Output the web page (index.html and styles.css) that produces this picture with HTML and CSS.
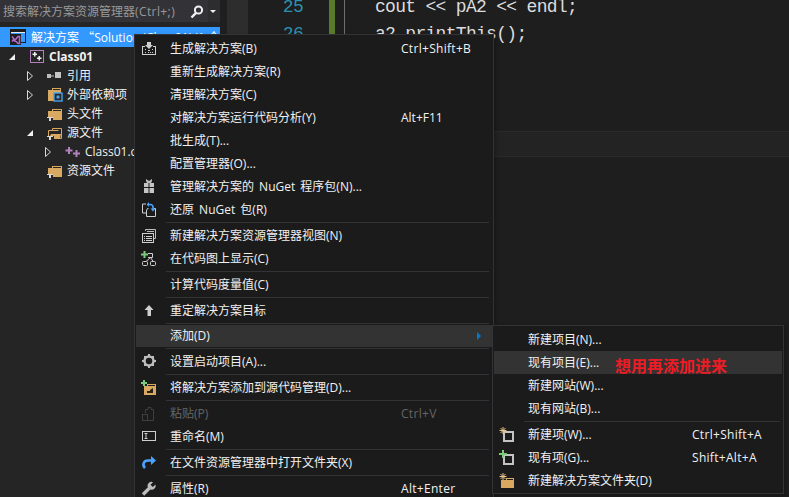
FILE: index.html
```html
<!DOCTYPE html>
<html lang="zh-CN">
<head>
<meta charset="utf-8">
<title>解决方案资源管理器</title>
<link rel="stylesheet" href="styles.css">
</head>
<body>
<div class="app">
  <aside class="explorer">
    <div class="search">
      <div class="search-box">
        <span class="search-text">搜索解决方案资源管理器<span class="lat">(Ctrl+;)</span></span>
        <svg class="search-glass" viewBox="0 0 14 14"><circle cx="8.5" cy="5" r="3.6" fill="none" stroke="#f0f0f0" stroke-width="2"/><path d="M6 7.800 1.500 12.500" stroke="#f0f0f0" stroke-width="2.400" fill="none"/></svg>
      </div>
      <div class="search-drop"><span class="tri-down"></span></div>
    </div>
    <div class="tree">
      <div class="row row-sel">
        <svg class="ic" viewBox="0 0 16 16"><rect x="0.500" y="0.500" width="15" height="13" fill="none" stroke="#1e1e1e"/><rect x="1" y="1" width="14" height="2" fill="#1e1e1e"/><rect x="1" y="3" width="14" height="1" fill="#e8e8e8"/><rect x="0" y="5" width="11" height="11" fill="#1e1e1e"/><path d="M2 7.500 4 10 2 12.500M4 12.500 8 7.500h1.500v7H8l-4-4.500" fill="none" stroke="#b06ac8" stroke-width="1.500"/></svg>
        <span class="lbl">解决方案 <span class="cjk">“</span>Solution 'Class01' (1 个项目)</span>
      </div>
      <div class="row lv1">
        <span class="tw"><span class="tri-open"></span></span>
        <svg class="ic" viewBox="0 0 16 16"><rect x="1.500" y="1.500" width="13" height="12" fill="none" stroke="#b180bd"/><path d="M5 3h1.500v1.500H8V6H6.500v1.500H5V6H3.500V4.500H5zM9.500 7H11v1.500h1.500V10H11v1.500H9.500V10H8V8.500h1.500z" fill="#f0f0f0"/></svg>
        <span class="lbl lbl-b">Class01</span>
      </div>
      <div class="row lv2">
        <span class="tw"><svg class="tri-closed" viewBox="0 0 6 10"><path d="M.5.500v9L5.500 5z" fill="none" stroke="#d8d8d8"/></svg></span>
        <svg class="ic" viewBox="0 0 16 16"><rect x="0" y="6" width="4" height="4" fill="#bdbdbd"/><rect x="4" y="7.500" width="3" height="1" fill="#bdbdbd"/><rect x="8" y="4" width="6" height="6" fill="#c4c4c4"/></svg>
        <span class="lbl">引用</span>
      </div>
      <div class="row lv2">
        <span class="tw"><svg class="tri-closed" viewBox="0 0 6 10"><path d="M.5.500v9L5.500 5z" fill="none" stroke="#d8d8d8"/></svg></span>
        <svg class="ic" viewBox="0 0 16 16"><path d="M1 3h4V1h9v5H9v8H1z" fill="#d9a861"/><path d="M6 2h7v1H6z" fill="#252526"/><rect x="7" y="6" width="8" height="8" fill="#252526" stroke="#4aa3e8" stroke-width="1.400"/><rect x="9.500" y="8.500" width="3" height="3" fill="#4aa3e8"/></svg>
        <span class="lbl">外部依赖项</span>
      </div>
      <div class="row lv2">
        <span class="tw"></span>
        <svg class="ic" viewBox="0 0 16 16"><path d="M1 5h4V3h10v11H6v-3H1z" fill="#d9a861"/><path d="M6 4h8v1H6z" fill="#252526"/><path d="M0 11h6v1H4v3H2v-3H0z" fill="#d8d8d8"/></svg>
        <span class="lbl">头文件</span>
      </div>
      <div class="row lv2">
        <span class="tw"><span class="tri-open"></span></span>
        <svg class="ic" viewBox="0 0 16 16"><path d="M1.500 11V5.500h4v-2h9v10h-2M5 5.500h6.500" fill="none" stroke="#d9a861"/><path d="M4 9h10l-1 5H7v-3H3z" fill="#d9a861"/><path d="M0 11h6v1H4v3H2v-3H0z" fill="#d8d8d8"/></svg>
        <span class="lbl">源文件</span>
      </div>
      <div class="row lv3">
        <span class="tw"><svg class="tri-closed" viewBox="0 0 6 10"><path d="M.5.500v9L5.500 5z" fill="none" stroke="#d8d8d8"/></svg></span>
        <svg class="ic" viewBox="0 0 16 16"><path d="M3 3h2v2.500h2.500v2H5V10H3V7.500H.5v-2H3zM10.500 6h2v2.500H15v2h-2.500V13h-2v-2.500H8v-2h2.500z" fill="#b180bd"/></svg>
        <span class="lbl">Class01.cpp</span>
      </div>
      <div class="row lv2">
        <span class="tw"></span>
        <svg class="ic" viewBox="0 0 16 16"><path d="M1 5h4V3h10v11H6v-3H1z" fill="#d9a861"/><path d="M6 4h8v1H6z" fill="#252526"/><path d="M0 11h6v1H4v3H2v-3H0z" fill="#d8d8d8"/></svg>
        <span class="lbl">资源文件</span>
      </div>
    </div>
  </aside>
  <div class="split"></div>
  <main class="editor">
    <div class="margin-grip"></div>
    <div class="numbers"><div class="ln">25</div><div class="ln">26</div></div>
    <div class="changes"><div class="change-bar"></div></div>
    <div class="outline"></div>
    <div class="code">
      <div class="line">cout &lt;&lt; pA2 &lt;&lt; endl;</div>
      <div class="line">a2.printThis();</div>
      <div class="current"></div>
    </div>
  </main>
</div>

<div class="menu menu-main">
  <div class="mi"><span class="mi-i"><svg class="ic" viewBox="0 0 16 16"><path d="M6 1h4v3h2L8 8 4 4h2z" fill="#cfcfcf"/><path d="M1 5h3v1H2v7h12V6h-2V5h3v9H1z" fill="#cfcfcf"/><path d="M4 8h1v1H4zM7 9h2v1H7zM11 8h1v1h-1zM4 11h1v1H4zM7 11h1v1H7zM9 11h1v1H9zM11 11h1v1h-1z" fill="#cfcfcf"/></svg></span><span class="mi-l">生成解决方案(B)</span><span class="mi-k">Ctrl+Shift+B</span></div>
  <div class="mi"><span class="mi-i"></span><span class="mi-l">重新生成解决方案(R)</span></div>
  <div class="mi"><span class="mi-i"></span><span class="mi-l">清理解决方案(C)</span></div>
  <div class="mi"><span class="mi-i"></span><span class="mi-l">对解决方案运行代码分析(Y)</span><span class="mi-k mi-k-tight">Alt+F11</span></div>
  <div class="mi"><span class="mi-i"></span><span class="mi-l">批生成(T)...</span></div>
  <div class="mi"><span class="mi-i"></span><span class="mi-l">配置管理器(O)...</span></div>
  <div class="mi"><span class="mi-i"><svg class="ic" viewBox="0 0 16 16"><path d="M5 0l3 2 3-2v2l-1 2H6L5 2z" fill="#bdbdbd"/><path d="M3 4h4.500v4H3zM8.500 4H13v4H8.500zM3 9h4.500v5H3zM8.500 9H13v5H8.500z" fill="#c4c4c4"/></svg></span><span class="mi-l">管理解决方案的 NuGet 程序包(N)...</span></div>
  <div class="mi"><span class="mi-i"><svg class="ic" viewBox="0 0 16 16"><path d="M5 2H1.500v9H5" fill="none" stroke="#cfcfcf"/><path d="M6.500 7.500v-1h1M13 6.500h1.500v8h-9v-7" fill="none" stroke="#cfcfcf"/><path d="M6 2.500h3.500a2.500 2.500 0 0 1 2.500 2.500v2" fill="none" stroke="#4aa3ff" stroke-width="1.600"/><path d="M9.500 6.500h5L12 9.500z" fill="#4aa3ff"/><path d="M8 0v5L6 2.500z" fill="#4aa3ff"/></svg></span><span class="mi-l">还原 NuGet 包(R)</span></div>
  <div class="sep"></div>
  <div class="mi"><span class="mi-i"><svg class="ic" viewBox="0 0 16 16"><path d="M4.500 3V1.500h10v9H13" fill="none" stroke="#bdbdbd"/><rect x="6" y="3" width="7" height="1" fill="#bdbdbd"/><rect x="1.500" y="5.500" width="11" height="9" fill="#1b1b1c" stroke="#cfcfcf"/><path d="M3 8h1v1H3zM5 8h6v1H5zM3 10h1v1H3zM5 10h6v1H5zM3 12h1v1H3zM5 12h6v1H5z" fill="#cfcfcf"/></svg></span><span class="mi-l">新建解决方案资源管理器视图(N)</span></div>
  <div class="mi"><span class="mi-i"><svg class="ic" viewBox="0 0 16 16"><path d="M7 2.500h4.500v4H7M9.500 6.500l-5 4.500M9.500 6.500l3 4.500" fill="none" stroke="#cfcfcf"/><rect x="1.500" y="10.500" width="5" height="4" rx="1" fill="#1b1b1c" stroke="#cfcfcf"/><rect x="9.500" y="10.500" width="5" height="4" rx="1" fill="#1b1b1c" stroke="#cfcfcf"/><path d="M2.500 0h2v2.500H7v2H4.500V7h-2V4.500H0v-2h2.500z" fill="#7ccb7c"/></svg></span><span class="mi-l">在代码图上显示(C)</span></div>
  <div class="sep"></div>
  <div class="mi"><span class="mi-i"></span><span class="mi-l">计算代码度量值(C)</span></div>
  <div class="sep"></div>
  <div class="mi"><span class="mi-i"><svg class="ic" viewBox="0 0 16 16"><path d="M8 2l4.500 5H10v6H6.500V7H3.500z" fill="#cfcfcf"/></svg></span><span class="mi-l">重定解决方案目标</span></div>
  <div class="sep"></div>
  <div class="mi mi-hot mi-short"><span class="mi-i"></span><span class="mi-l">添加(D)</span><span class="mi-arrow"></span></div>
  <div class="sep"></div>
  <div class="mi"><span class="mi-i"><svg class="ic" viewBox="0 0 16 16"><circle cx="8" cy="7" r="4.500" fill="none" stroke="#bdbdbd" stroke-width="2.500"/><path d="M7 0h2v2H7zM7 12h2v2H7zM1 6h2v2H1zM13 6h2v2h-2zM3 2h2v2H3zM11 2h2v2h-2zM3 10h2v2H3zM11 10h2v2h-2z" fill="#bdbdbd"/></svg></span><span class="mi-l">设置启动项目(A)...</span></div>
  <div class="sep"></div>
  <div class="mi"><span class="mi-i"><svg class="ic" viewBox="0 0 16 16"><path d="M3 6h3V4h9v11H3z" fill="#d9a861"/><path d="M7 5h7v1H7z" fill="#1b1b1c"/><path d="M6 11h3v-1l3-2v5H6z" fill="#2a2015"/><path d="M2 0h2v2h2v2H4v2H2V4H0V2h2z" fill="#7ccb7c"/></svg></span><span class="mi-l">将解决方案添加到源代码管理(D)...</span></div>
  <div class="sep"></div>
  <div class="mi mi-off"><span class="mi-i"><svg class="ic" viewBox="0 0 16 16"><path d="M4.500 7V3.500H7V1.500h3v2h2.500v11H7" fill="none" stroke="#3f3f40"/><rect x="1.500" y="8.500" width="5" height="6" fill="none" stroke="#3f3f40"/></svg></span><span class="mi-l">粘贴(P)</span><span class="mi-k">Ctrl+V</span></div>
  <div class="mi"><span class="mi-i"><svg class="ic" viewBox="0 0 16 16"><rect x="1.500" y="2.500" width="13" height="9" fill="none" stroke="#cfcfcf"/><path d="M3.500 4.500h3M5 4.500v5M3.500 9.500h3" fill="none" stroke="#cfcfcf"/></svg></span><span class="mi-l">重命名(M)</span></div>
  <div class="sep"></div>
  <div class="mi"><span class="mi-i"><svg class="ic" viewBox="0 0 16 16"><path d="M4 13C1 10 2.500 5.500 7 5.500h4" fill="none" stroke="#4aa3ff" stroke-width="2.600"/><path d="M10 1l5 4.500L10 10z" fill="#4aa3ff"/></svg></span><span class="mi-l">在文件资源管理器中打开文件夹(X)</span></div>
  <div class="sep"></div>
  <div class="mi"><span class="mi-i"><svg class="ic" viewBox="0 0 16 16"><path d="M2 13.500 8.500 7" fill="none" stroke="#bdbdbd" stroke-width="3.400"/><path d="M6.500 5.500A4 4 0 0 1 12 1.200L9.500 3.800l2.300 2.200L14.500 3.500A4 4 0 0 1 9.500 8.500z" fill="#bdbdbd"/></svg></span><span class="mi-l">属性(R)</span><span class="mi-k">Alt+Enter</span></div>
</div>

<div class="menu menu-sub">
  <div class="mi"><span class="mi-i"></span><span class="mi-l mi-l-sub">新建项目(N)...</span></div>
  <div class="mi mi-hot"><span class="mi-i"></span><span class="mi-l mi-l-sub">现有项目(E)...</span></div>
  <div class="mi"><span class="mi-i"></span><span class="mi-l mi-l-sub">新建网站(W)...</span></div>
  <div class="mi"><span class="mi-i"></span><span class="mi-l mi-l-sub">现有网站(B)...</span></div>
  <div class="sep sep-sub"></div>
  <div class="mi"><span class="mi-i"><svg class="ic" viewBox="0 0 16 16"><rect x="5" y="5" width="9" height="9" fill="none" stroke="#c4c4c4" stroke-width="2"/><path d="M4 0v7M.5 3.500h7M1.500 1l5 5M6.500 1l-5 5" stroke="#e8c48a" stroke-width="1"/></svg></span><span class="mi-l mi-l-sub">新建项(W)...</span><span class="mi-k">Ctrl+Shift+A</span></div>
  <div class="mi"><span class="mi-i"><svg class="ic" viewBox="0 0 16 16"><rect x="5" y="5" width="9" height="9" fill="none" stroke="#c4c4c4" stroke-width="2"/><path d="M3 0h2v3h3v2H5v3H3V5H0V3h3z" fill="#7ccb7c"/></svg></span><span class="mi-l mi-l-sub">现有项(G)...</span><span class="mi-k">Shift+Alt+A</span></div>
  <div class="mi"><span class="mi-i"><svg class="ic" viewBox="0 0 16 16"><path d="M2 7h5V5h8v10H2z" fill="#d9a861"/><path d="M8 6h6v1H8z" fill="#1b1b1c"/><path d="M4 0v7M.5 3.500h7M1.500 1l5 5M6.500 1l-5 5" stroke="#e8c48a" stroke-width="1"/></svg></span><span class="mi-l mi-l-sub">新建解决方案文件夹(D)</span></div>
</div>
<div class="note">想用再添加进来</div>
</body>
</html>
```
FILE: styles.css
```css
* { box-sizing: border-box; }
html, body { margin: 0; padding: 0; }
body {
  width: 789px;
  height: 497px;
  overflow: hidden;
  position: relative;
  background: #1e1e1e;
  color: #f1f1f1;
  font: 12px/16px "Open Sans", "Noto Sans CJK SC", sans-serif;
}
.app { display: flex; height: 497px; }
.lat { letter-spacing: .4px; }
.cjk { font-family: "Noto Sans CJK SC", sans-serif; }

/* solution explorer */
.explorer { width: 220px; background: #252526; flex: none; overflow: hidden; }
.search { display: flex; height: 22px; margin-bottom: 5px; background: #2d2d30; }
.search-box {
  width: 208px;
  background: #333337;
  display: flex;
  align-items: center;
  justify-content: space-between;
  padding: 1px 3px 0 3px;
}
.search-text { color: #999; white-space: nowrap; }
.search-glass { width: 14px; height: 14px; margin-right: 1px; }
.search-drop { flex: 1; display: flex; align-items: center; padding-left: 2px; }
.tri-down { width: 0; height: 0; border: 3px solid transparent; border-top: 3px solid #f0f0f0; border-bottom: 0; }

.row { height: 19px; display: flex; align-items: center; white-space: nowrap; }
.row-sel { height: 20px; padding-left: 10px; gap: 5px; background: #3399ff; color: #fff; }
.lv1 { padding-left: 9px; }
.lv2 { padding-left: 27px; }
.lv3 { padding-left: 45px; }
.tw { width: 20px; flex: none; display: flex; align-items: center; }
.tri-open { width: 0; height: 0; border-style: solid; border-width: 0 0 6px 6px; border-color: transparent transparent #f0f0f0 transparent; }
.tri-closed { width: 6px; height: 10px; display: block; }
.ic { width: 16px; height: 16px; flex: none; display: block; }
.row .lbl { margin-left: 4px; }
.row-sel .lbl { margin-left: 0; }
.lbl-b { font-weight: 700; }

/* editor */
.split { width: 7px; flex: none; background: #1f1f20; }
.editor { flex: 1; display: flex; overflow: hidden; background: #1e1e1e; }
.margin-grip { width: 21px; flex: none; background: #2d2d2e; }
.numbers, .code { margin-top: -6px; font: 18px/27px "Liberation Mono", monospace; letter-spacing: -.7px; }
.numbers { width: 55px; flex: none; text-align: right; color: #2b91af; }
.changes { width: 32px; flex: none; padding-left: 26px; }
.change-bar { width: 6px; height: 60px; background: #5a7a2c; }
.outline { width: 1px; flex: none; margin-left: 9px; background: #6e6e6e; }
.code { flex: 1; padding-left: 30px; color: #dcdcdc; white-space: nowrap; }
.current { height: 26px; margin: 83px 0 0 -30px; background: #232323; border: 1px solid #2a2a2a; border-right: 0; }

/* menus */
.menu {
  position: absolute;
  background: #1b1b1c;
  border: 1px solid #333337;
  padding: 2px 1px;
  box-shadow: 2px 2px 4px rgba(0, 0, 0, .25);
}
.menu-main { left: 134px; top: 34px; width: 360px; height: 470px; }
.menu-sub { left: 492px; top: 325px; width: 292px; height: 169px; }
.mi { display: flex; height: 23px; align-items: center; white-space: nowrap; position: relative; }
.mi-short { height: 22px; }
.mi-i { width: 34px; height: 23px; flex: none; padding: 4px 0 0 5px; }
.mi-l { width: 231px; flex: none; word-spacing: 2px; }
.mi-l-sub { width: 164px; }
.mi-k { letter-spacing: .3px; }
.mi-k-tight { letter-spacing: 0; }
.mi-hot { background: #333334; }
.mi-off { color: #656565; }
.mi-arrow {
  position: absolute;
  left: 341px;
  top: 7px;
  border-style: solid;
  border-width: 4px 0 4px 4px;
  border-color: transparent transparent transparent #007acc;
}
.sep { height: 1px; margin: 1px 3px 1px 30px; background: #333337; }
.sep-sub { margin-right: 2px; }

.note {
  position: absolute;
  left: 615px;
  top: 354px;
  color: #ed1c24;
  font: 700 16px/22px "Noto Sans CJK SC", sans-serif;
}
```
